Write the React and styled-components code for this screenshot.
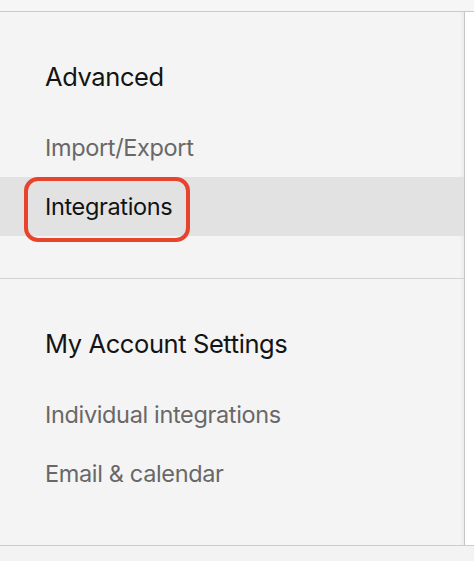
import React from 'react';
import styled, { createGlobalStyle } from 'styled-components';

const sections = [
  {
    title: 'Advanced',
    items: [
      { label: 'Import/Export' },
      { label: 'Integrations', active: true, marked: true },
    ],
  },
  {
    title: 'My Account Settings',
    items: [
      { label: 'Individual integrations' },
      { label: 'Email & calendar' },
    ],
  },
];

const GlobalStyle = createGlobalStyle`
  html, body {
    margin: 0;
    padding: 0;
    background: #ffffff;
  }
  body {
    font-family: Inter, "Noto Sans", "Liberation Sans", sans-serif;
    -webkit-font-smoothing: antialiased;
  }
`;

export default function App () {
  return (
    <Page>
      <GlobalStyle />
      <TopBar />
      <Body>
        <Sidebar>
          {sections.map((section) => (
            <Section key={section.title}>
              <SectionTitle>{section.title}</SectionTitle>
              {section.items.map((item) => (
                <NavItem key={item.label} active={item.active}>
                  <NavLabel active={item.active}>{item.label}</NavLabel>
                  {item.marked && <Marker />}
                </NavItem>
              ))}
            </Section>
          ))}
        </Sidebar>
        <Blank />
      </Body>
      <BottomBar />
    </Page>
  );
}

const Page = styled.div`
  display: flex;
  flex-direction: column;
  width: 474px;
  height: 561px;
  overflow: hidden;
  background: #ffffff;
`;

const TopBar = styled.div`
  height: 11px;
  flex-shrink: 0;
  background: #f6f6f6;
  border-bottom: 1px solid #c9c9c9;
`;

const Body = styled.div`
  display: flex;
  flex: 1;
  min-height: 0;
`;

const Sidebar = styled.nav`
  width: 464px;
  display: flex;
  flex-direction: column;
  background: #f4f4f4;
  border-right: 1.5px solid #c6c6c6;
  box-shadow: inset -4px 0 4px -3px rgba(0, 0, 0, 0.06);
`;

const Blank = styled.div`
  flex: 1;
  background: #ffffff;
`;

const Section = styled.div`
  display: flex;
  flex-direction: column;
  padding: 35px 0 42px;

  & + & {
    border-top: 1px solid #d4d4d4;
    padding-top: 35px;
  }
`;

const SectionTitle = styled.div`
  height: 59px;
  line-height: 59px;
  padding-left: 45px;
  margin-bottom: 12px;
  font-size: 25.5px;
  letter-spacing: -0.4px;
  font-weight: 400;
  color: #141414;
`;

const NavItem = styled.div`
  position: relative;
  height: 59px;
  display: flex;
  align-items: center;
  padding-left: 45px;
  background: ${({ active }) => (active ? '#e2e2e2' : 'transparent')};
`;

const NavLabel = styled.span`
  font-size: 23.5px;
  letter-spacing: -0.35px;
  line-height: 59px;
  color: ${({ active }) => (active ? '#121212' : '#686868')};
`;

const Marker = styled.span`
  position: absolute;
  left: 24px;
  top: 0;
  width: 166px;
  height: 65px;
  box-sizing: border-box;
  border: 4.5px solid #e8442d;
  border-radius: 14px;
  pointer-events: none;
`;

const BottomBar = styled.div`
  height: 15px;
  flex-shrink: 0;
  background: #f3f3f3;
  border-top: 1px solid #cdcdcd;
`;
